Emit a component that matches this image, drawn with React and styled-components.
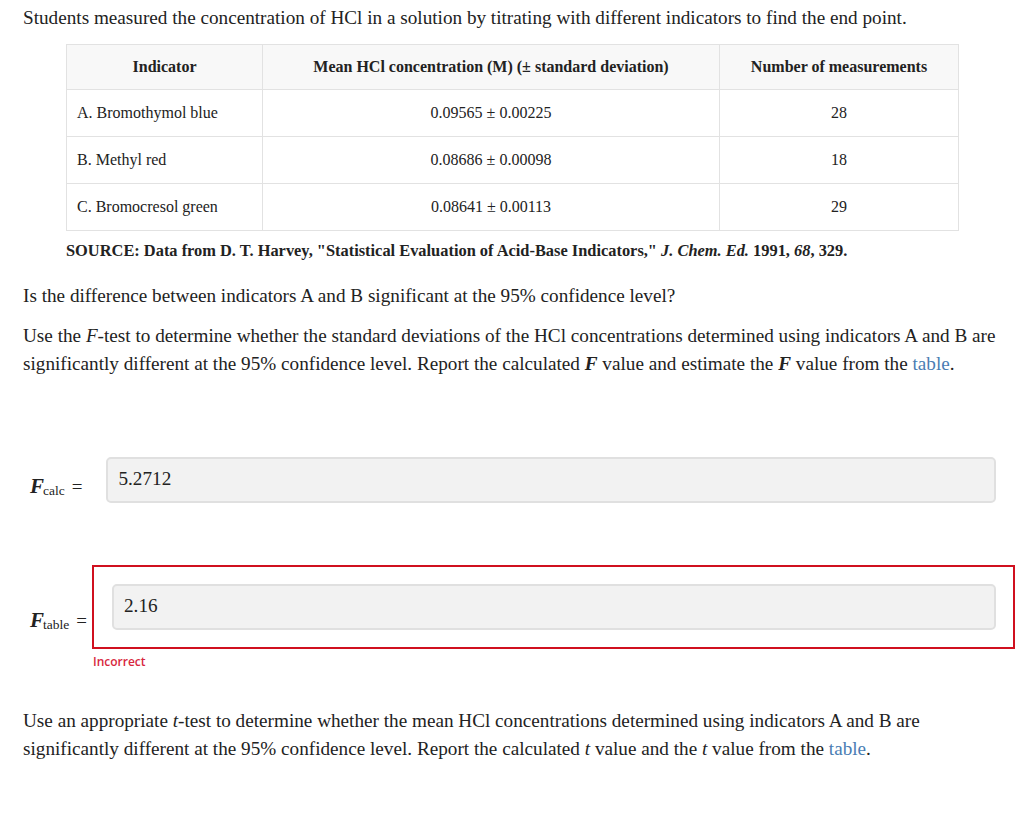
import React from 'react';
import styled, { createGlobalStyle } from 'styled-components';

const GlobalStyle = createGlobalStyle`
  html, body {
    margin: 0;
    padding: 0;
    background: #fff;
  }
  body {
    font-family: "Liberation Serif", "Times New Roman", serif;
    color: #222;
  }
`;

const Page = styled.div`
  padding: 4px 0 40px 23px;
  width: 1001px;
  box-sizing: border-box;
`;

const Para = styled.p`
  margin: ${({ $mt }) => $mt || 0}px 0 0;
  font-size: 19.2px;
  line-height: 28px;
`;

const Link = styled.a`
  color: #4a7db3;
  text-decoration: none;
`;

const TableWrap = styled.div`
  margin: 12px 0 0 43px;
`;

const Table = styled.table`
  width: 892px;
  table-layout: fixed;
  border-collapse: collapse;
  font-size: 16px;
  border: 1px solid #ddd;

  th, td {
    border: 1px solid #e2e2e2;
    padding: 0 10px;
  }
`;

const Th = styled.th`
  height: 45px;
  box-sizing: border-box;
  background: #f8f8f8;
  font-weight: bold;
  width: ${({ $w }) => $w}px;
`;

const Td = styled.td`
  height: 47px;
  box-sizing: border-box;
  text-align: ${({ $left }) => ($left ? 'left' : 'center')};
`;

const Source = styled.div`
  margin: 10px 0 0 43px;
  font-size: 16.4px;
  font-weight: bold;
  line-height: 20px;
`;

const AnswerRow = styled.div`
  display: flex;
  align-items: ${({ $align }) => $align || 'center'};
  margin-top: ${({ $mt }) => $mt}px;
  padding-left: 7px;
`;

const Label = styled.div`
  display: flex;
  align-items: baseline;
  flex: none;
  margin-right: ${({ $gap }) => $gap}px;
  margin-bottom: ${({ $mb }) => $mb || 0}px;
  padding-top: ${({ $pt }) => $pt || 0}px;
  font-size: 19px;

  i {
    font-weight: bold;
    font-size: 21px;
    margin-right: -1px;
  }
  sub {
    font-size: 13.5px;
    vertical-align: baseline;
    position: relative;
    top: 2px;
  }
  span {
    margin-left: ${({ $eq }) => $eq}px;
  }
`;

const Field = styled.div`
  flex: 1;
  height: 46px;
  box-sizing: border-box;
  background: #f2f2f2;
  border: 2px solid #e0e0e0;
  border-radius: 5px;
  font-size: 19.2px;
  padding: 9px 10px 0;
  margin-right: ${({ $mr }) => $mr || 0}px;
`;

const ErrorBox = styled.div`
  flex: 1;
  display: flex;
  border: 2px solid #d0101f;
  padding: 17px 17px 17px 18px;
  margin-right: -14px;
`;

const ErrorText = styled.div`
  margin: 5px 0 0 70px;
  font-family: "Open Sans", "Noto Sans", sans-serif;
  font-size: 12px;
  font-weight: 600;
  color: #d7263d;
  line-height: 16px;
`;

const rows = [
  ['A. Bromothymol blue', '0.09565', '0.00225', 28],
  ['B. Methyl red', '0.08686', '0.00098', 18],
  ['C. Bromocresol green', '0.08641', '0.00113', 29],
];

const App = () => (
  <>
    <GlobalStyle />
    <Page>
      <Para>
        Students measured the concentration of HCl in a solution by titrating with different
        indicators to find the end point.
      </Para>

      <TableWrap>
        <Table>
          <thead>
            <tr>
              <Th $w={196}>Indicator</Th>
              <Th $w={457}>Mean HCl concentration (M) (± standard deviation)</Th>
              <Th $w={239}>Number of measurements</Th>
            </tr>
          </thead>
          <tbody>
            {rows.map(([name, mean, sd, n]) => (
              <tr key={name}>
                <Td $left>{name}</Td>
                <Td>
                  {mean} ± {sd}
                </Td>
                <Td>{n}</Td>
              </tr>
            ))}
          </tbody>
        </Table>
      </TableWrap>

      <Source>
        SOURCE: Data from D. T. Harvey, "Statistical Evaluation of Acid-Base Indicators,"{' '}
        <i>J. Chem. Ed.</i> 1991, <i>68</i>, 329.
      </Source>

      <Para $mt={21}>Is the difference between indicators A and B significant at the 95% confidence level?</Para>
      <Para $mt={12}>
        Use the <i>F</i>-test to determine whether the standard deviations of the HCl concentrations
        determined using indicators A and B are significantly different at the 95% confidence level.
        Report the calculated <b><i>F</i></b> value and estimate the <b><i>F</i></b> value from the{' '}
        <Link href="#">table</Link>.
      </Para>

      <AnswerRow $mt={79}>
        <Label $gap={24} $pt={12} $eq={7}>
          <i>F</i>
          <sub>calc</sub>
          <span>=</span>
        </Label>
        <Field $mr={5}>5.2712</Field>
      </AnswerRow>

      <AnswerRow $mt={62} $align="flex-end">
        <Label $gap={5} $mb={16} $eq={7}>
          <i>F</i>
          <sub>table</sub>
          <span>=</span>
        </Label>
        <ErrorBox>
          <Field>2.16</Field>
        </ErrorBox>
      </AnswerRow>
      <ErrorText>Incorrect</ErrorText>

      <Para $mt={37}>
        Use an appropriate <i>t</i>-test to determine whether the mean HCl concentrations determined
        using indicators A and B are significantly different at the 95% confidence level. Report the
        calculated <i>t</i> value and the <i>t</i> value from the <Link href="#">table</Link>.
      </Para>
    </Page>
  </>
);

export default App;
